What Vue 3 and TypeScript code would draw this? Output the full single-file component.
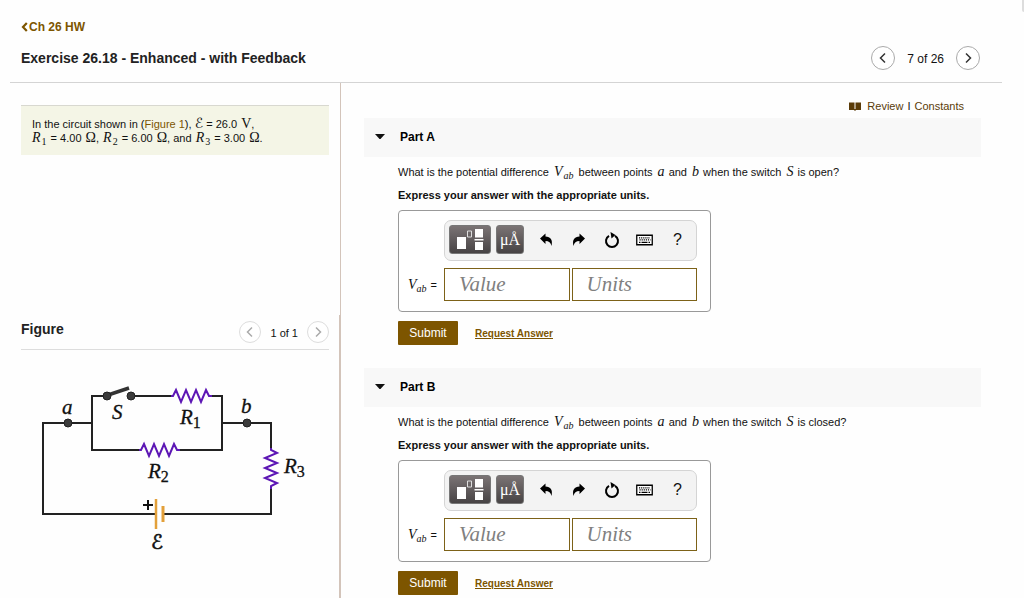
<script setup lang="ts">
import { reactive } from 'vue'

interface Part {
  id: string
  title: string
  state: string
  value: string
  units: string
}

const parts = reactive<Part[]>([
  { id: 'a', title: 'Part A', state: 'open', value: '', units: '' },
  { id: 'b', title: 'Part B', state: 'closed', value: '', units: '' },
])

function clearPart(part: Part): void {
  part.value = ''
  part.units = ''
}
</script>

<template>
  <div class="page">
    <header class="top">
      <a class="back" href="#hw">
        <svg width="7" height="10" viewBox="0 0 7 10" aria-hidden="true"><path d="M5.800 1 2 5l3.800 4" fill="none" stroke="currentColor" stroke-width="2.200" /></svg>
        <span>Ch 26 HW</span>
      </a>
      <div class="title-row">
        <h1>Exercise 26.18 - Enhanced - with Feedback</h1>
        <nav class="pager">
          <button type="button" class="round" aria-label="Previous item">
            <svg width="10" height="12" viewBox="0 0 10 12"><path d="M7 1.500 2.500 6 7 10.500" /></svg>
          </button>
          <span>7 of 26</span>
          <button type="button" class="round" aria-label="Next item">
            <svg width="10" height="12" viewBox="0 0 10 12"><path d="M3 1.500 7.500 6 3 10.500" /></svg>
          </button>
        </nav>
      </div>
    </header>

    <div class="body">
      <aside class="side">
        <div class="intro-pane">
          <p class="intro">
            In the circuit shown in (<a href="#figure">Figure 1</a>), <span class="script">ℰ</span> = 26.0 <span class="m">V</span>,<br />
            <i class="m first">R</i><sub class="m">1</sub> = 4.00 <span class="m">Ω</span>, <i class="m">R</i><sub class="m">2</sub> = 6.00 <span class="m">Ω</span>, and <i class="m">R</i><sub class="m">3</sub> = 3.00 <span class="m">Ω</span>.
          </p>
        </div>
        <section id="figure" class="figure-pane">
          <div class="figure-head">
            <h2>Figure</h2>
            <nav class="pager small">
              <button type="button" class="round" aria-label="Previous figure">
                <svg width="10" height="12" viewBox="0 0 10 12"><path d="M7 1.500 2.500 6 7 10.500" /></svg>
              </button>
              <span>1 of 1</span>
              <button type="button" class="round" aria-label="Next figure">
                <svg width="10" height="12" viewBox="0 0 10 12"><path d="M3 1.500 7.500 6 3 10.500" /></svg>
              </button>
            </nav>
          </div>
          <svg class="circuit" width="300" height="190" viewBox="21 370 300 190" role="img" aria-label="Circuit with a switch, three resistors and a battery">
            <g fill="none" stroke="#222" stroke-width="2">
              <path d="M155 514H43V423H92M107 396H92V450H140M131 396H172M210 396H222V450H178M222 423H271V449M271 488V514H164" />
            </g>
            <g fill="none" stroke="#5d17b5" stroke-width="2">
              <path d="M171 396h2l3-6 5 12 5-12 5 12 5-12 5 12 5-12 3 6h3" />
              <path d="M139 450h2l3-6 5 12 5-12 5 12 5-12 5 12 5-12 3 6h3" />
              <path d="M271 448v2l6 3-12 5 12 5-12 5 12 5-12 5 12 5-6 3v3" />
            </g>
            <path d="M108 395 129 388" stroke="#333" stroke-width="3.500" />
            <g fill="#3c3c3c" stroke="#222">
              <circle cx="107" cy="396" r="4" /><circle cx="131" cy="396" r="4" />
              <circle cx="68" cy="423" r="4" /><circle cx="247" cy="423" r="4" />
            </g>
            <path d="M156 499v30" stroke="#e3a03a" stroke-width="2.500" />
            <path d="M163 506v16" stroke="#e3a03a" stroke-width="3" />
            <path d="M143 505h10M148 500v10" stroke="#111" stroke-width="2" />
            <g class="labels">
              <text x="62" y="414">a</text>
              <text x="112" y="419">S</text>
              <text x="241" y="413">b</text>
              <text x="180" y="424">R<tspan class="idx" dy="4">1</tspan></text>
              <text x="148" y="478">R<tspan class="idx" dy="4">2</tspan></text>
              <text x="284" y="473">R<tspan class="idx" dy="4">3</tspan></text>
              <text x="151" y="549" class="emf">ℰ</text>
            </g>
          </svg>
        </section>
      </aside>

      <main class="work">
        <div class="refs">
          <svg width="12" height="9" viewBox="0 0 12 9" aria-hidden="true"><path d="M0 .5h5.500v7.500H0zM6.500.5H12v7.500H6.500zM5 7h2v1.500H5z" fill="#5a3b08" /></svg>
          <a href="#review">Review</a><span class="bar">I</span><a href="#constants">Constants</a>
        </div>

        <section v-for="part in parts" :key="part.id" class="part">
          <h2 class="part-head">
            <button type="button" aria-expanded="true">
              <svg width="10" height="6" viewBox="0 0 10 6" aria-hidden="true"><path d="M0 0h10L5.500 5h-1z" fill="#111" /></svg>
              <span>{{ part.title }}</span>
            </button>
          </h2>
          <div class="part-body">
            <p class="ask">What is the potential difference <i class="m">V</i><sub class="m it">ab</sub> between points <i class="m">a</i> and <i class="m">b</i> when the switch <i class="m">S</i> is {{ part.state }}?</p>
            <p class="hint">Express your answer with the appropriate units.</p>
            <form class="answer" @submit.prevent>
              <div class="box">
                <div class="tools">
                  <button type="button" class="dark wide" aria-label="Templates">
                    <svg width="30" height="22" viewBox="0 0 30 22"><path d="M2 8h9v12H2zM20 0h8v8.500h-8zM19.500 10h9v1.500h-9zM20 13h8v8h-8z" fill="#fff" /><path d="M12.500 2h4v6h-4z" fill="none" stroke="#ddd" /></svg>
                  </button>
                  <button type="button" class="dark unit" aria-label="Symbols">μÅ</button>
                  <button type="button" class="plain" aria-label="Undo">
                    <svg width="14" height="14" viewBox="0 0 14 14"><path d="M1 5.500 6.500.5v3c5 .2 7.500 3 6 9.500-.8-3.500-2.500-5-6-5v3z" /></svg>
                  </button>
                  <button type="button" class="plain" aria-label="Redo">
                    <svg width="14" height="14" viewBox="0 0 14 14"><path d="M13 5.500 7.500.5v3c-5 .2-7.500 3-6 9.500.8-3.500 2.500-5 6-5v3z" /></svg>
                  </button>
                  <button type="button" class="plain" aria-label="Reset" @click="clearPart(part)">
                    <svg width="16" height="18" viewBox="0 0 16 18"><path d="M11 4.800A6 6 0 1 1 5 4.800" fill="none" stroke="#000" stroke-width="2" /><path d="M6.500 1 11.500 4 7.500 7.500z" /></svg>
                  </button>
                  <button type="button" class="plain" aria-label="Keyboard">
                    <svg width="17" height="12" viewBox="0 0 17 12"><path d="M.75 1.250h15.500v9.500H.75z" fill="#fff" stroke="#000" stroke-width="1.300" /><path d="M3 3.800h11M3.500 5.800h11" fill="none" stroke="#000" stroke-width="1.200" stroke-dasharray="1.200 .9" /><path d="M3 8.300h1.500M5.500 8.300h6M12.500 8.300H14" stroke="#000" stroke-width="1.200" /></svg>
                  </button>
                  <button type="button" class="plain help" aria-label="Help">?</button>
                </div>
                <div class="fields">
                  <label :for="'value-' + part.id"><i class="m first">V</i><sub class="m it">ab</sub> =</label>
                  <input :id="'value-' + part.id" v-model="part.value" type="text" placeholder="Value" />
                  <input v-model="part.units" type="text" placeholder="Units" aria-label="Units" />
                </div>
              </div>
              <div class="actions">
                <button type="submit" class="submit">Submit</button>
                <a :href="'#answer-' + part.id">Request Answer</a>
              </div>
            </form>
          </div>
        </section>
      </main>
    </div>
  </div>
</template>

<style>
body {
  background: #fefefe;
}
</style>

<style scoped>
.page {
  box-sizing: border-box;
  position: relative;
  height: 100vh;
  display: flex;
  flex-direction: column;
  overflow: hidden;
  font-family: "Liberation Sans", Arial, sans-serif;
  font-size: 11px;
  color: #111;
}
.page::after {
  content: "";
  position: absolute;
  top: 0;
  right: 0;
  width: 2px;
  height: 12px;
  border-bottom-left-radius: 2px;
  background: #ddd;
}
.page * { box-sizing: border-box; }
h1, h2, p { margin: 0; }
a { color: #7d5500; text-decoration: none; }
button { font: inherit; padding: 0; cursor: pointer; }

.top {
  margin: 0 22px 0 10px;
  padding: 20px 22px 12px 11px;
  border-bottom: 1px solid #d4d4d4;
}
.back {
  display: flex;
  align-items: center;
  gap: 1px;
  height: 14px;
  font-size: 12px;
  font-weight: bold;
}
.title-row {
  display: flex;
  justify-content: space-between;
  align-items: center;
  margin-top: 12px;
}
h1 { font-size: 14px; line-height: 24px; color: #222; }
.pager { display: flex; align-items: center; gap: 12px; font-size: 12px; }
.pager span { padding-top: 2px; }
.round {
  display: flex;
  align-items: center;
  justify-content: center;
  width: 24px;
  height: 24px;
  border: 1px solid #aaa;
  border-radius: 50%;
  background: #fff;
}
.round path { fill: none; stroke: #333; stroke-width: 1.5; }
.small { gap: 9px; font-size: 11px; }
.small .round { width: 22px; height: 22px; border-color: #ddd; }
.small .round path { stroke: #aaa; }

.body { display: flex; flex: 1; min-height: 0; }
.side {
  flex: 0 0 341px;
  display: flex;
  flex-direction: column;
}
.intro-pane {
  flex: none;
  height: 232px;
  padding: 22px 11px 0 21px;
  border-right: 1px solid #d3c4ba;
}
.figure-pane {
  flex: 1;
  padding: 6px 10px 0 21px;
  border-right: 2px solid #d3c4ba;
}
.intro {
  padding: 11px 11px 10px;
  border-top: 1px solid #d8d8d0;
  background: #f4f5e6;
  line-height: 14px;
}
.m {
  margin-left: 1px;
  font-family: "Liberation Serif", "Times New Roman", serif;
  font-size: 14px;
  line-height: 1px;
}
i.m { padding-right: 1px; }
.first { margin-left: 0; }
sub.m { margin: 0 1px 0 0; font-size: 10px; vertical-align: -3px; }
.it { font-style: italic; }
.script { font-family: "DejaVu Sans", sans-serif; font-size: 14px; font-style: italic; line-height: 1px; }

.figure-head {
  display: flex;
  justify-content: space-between;
  align-items: flex-start;
  height: 29px;
  border-bottom: 1px solid #ddd;
}
.figure-head h2 { font-size: 14px; line-height: 17px; color: #222; }
.circuit { display: block; margin-top: 20px; }
.labels { font: italic 21px "Liberation Serif", serif; fill: #111; stroke: #111; stroke-width: .3; }
.labels .idx { font-size: 16px; font-style: normal; }
.labels .emf { font-family: "DejaVu Sans", sans-serif; font-size: 20px; stroke-width: .6; }

.work { flex: 1; min-width: 0; padding: 16px 43px 0 23px; }
.refs {
  display: flex;
  align-items: center;
  justify-content: flex-end;
  height: 14px;
  margin: 0 17px 5px 0;
}
.refs svg { margin-right: 6px; }
.refs a { color: #5a3b08; }
.bar { margin: 0 4px; }
.part { margin-bottom: 23px; }
.part-head { height: 39px; background: #f8f8f8; font-size: 12px; }
.part-head button {
  display: flex;
  align-items: center;
  gap: 15px;
  width: 100%;
  height: 100%;
  padding: 0 0 1px 11px;
  border: 0;
  background: none;
}
.part-body { padding-left: 34px; }
.ask { padding-top: 7px; line-height: 16px; white-space: nowrap; }
.ask .m { margin-left: 2px; }
.ask sub.m { margin: 0 2px 0 0; }
.hint { margin-top: 7px; line-height: 16px; font-weight: bold; }
.box {
  width: 313px;
  margin-top: 7px;
  padding: 9px 13px 10px 9px;
  border: 1px solid #999;
  border-radius: 4px;
  background: #fff;
}
.tools {
  display: flex;
  align-items: center;
  height: 41px;
  margin-left: 36px;
  padding: 0 0 2px 4px;
  border: 1px solid #d4d4d4;
  border-radius: 7px;
  background: #f3f3f3;
}
.dark {
  display: flex;
  align-items: center;
  justify-content: center;
  height: 29px;
  margin-right: 5px;
  border: 1px solid #777;
  border-radius: 3px;
  background: linear-gradient(#7b7475, #474344);
  color: #fff;
}
.wide { width: 42px; }
.unit { width: 28px; font-family: "Liberation Serif", serif; font-size: 16px; }
.plain {
  display: flex;
  align-items: center;
  justify-content: center;
  width: 33px;
  height: 28px;
  border: 0;
  background: none;
  color: #111;
}
.help { font-size: 16px; }
.fields { display: flex; align-items: center; gap: 2px; margin-top: 7px; }
.fields label { flex: 0 0 34px; white-space: nowrap; }
.fields label i.m { padding-right: 0; }
.fields input {
  flex: 1;
  min-width: 0;
  height: 33px;
  padding: 0 14px;
  border: 1px solid #7d6218;
  background: #fff;
  font: italic 21px "Liberation Serif", serif;
}
.fields input::placeholder { color: #808080; opacity: 1; }
.actions { display: flex; align-items: center; gap: 17px; margin-top: 9px; }
.submit {
  width: 60px;
  height: 24px;
  border: 0;
  border-radius: 1px;
  background: #7d5500;
  color: #fff;
  font-size: 12px;
}
.actions a { font-weight: bold; text-decoration: underline; font-size: 10px; }
</style>
